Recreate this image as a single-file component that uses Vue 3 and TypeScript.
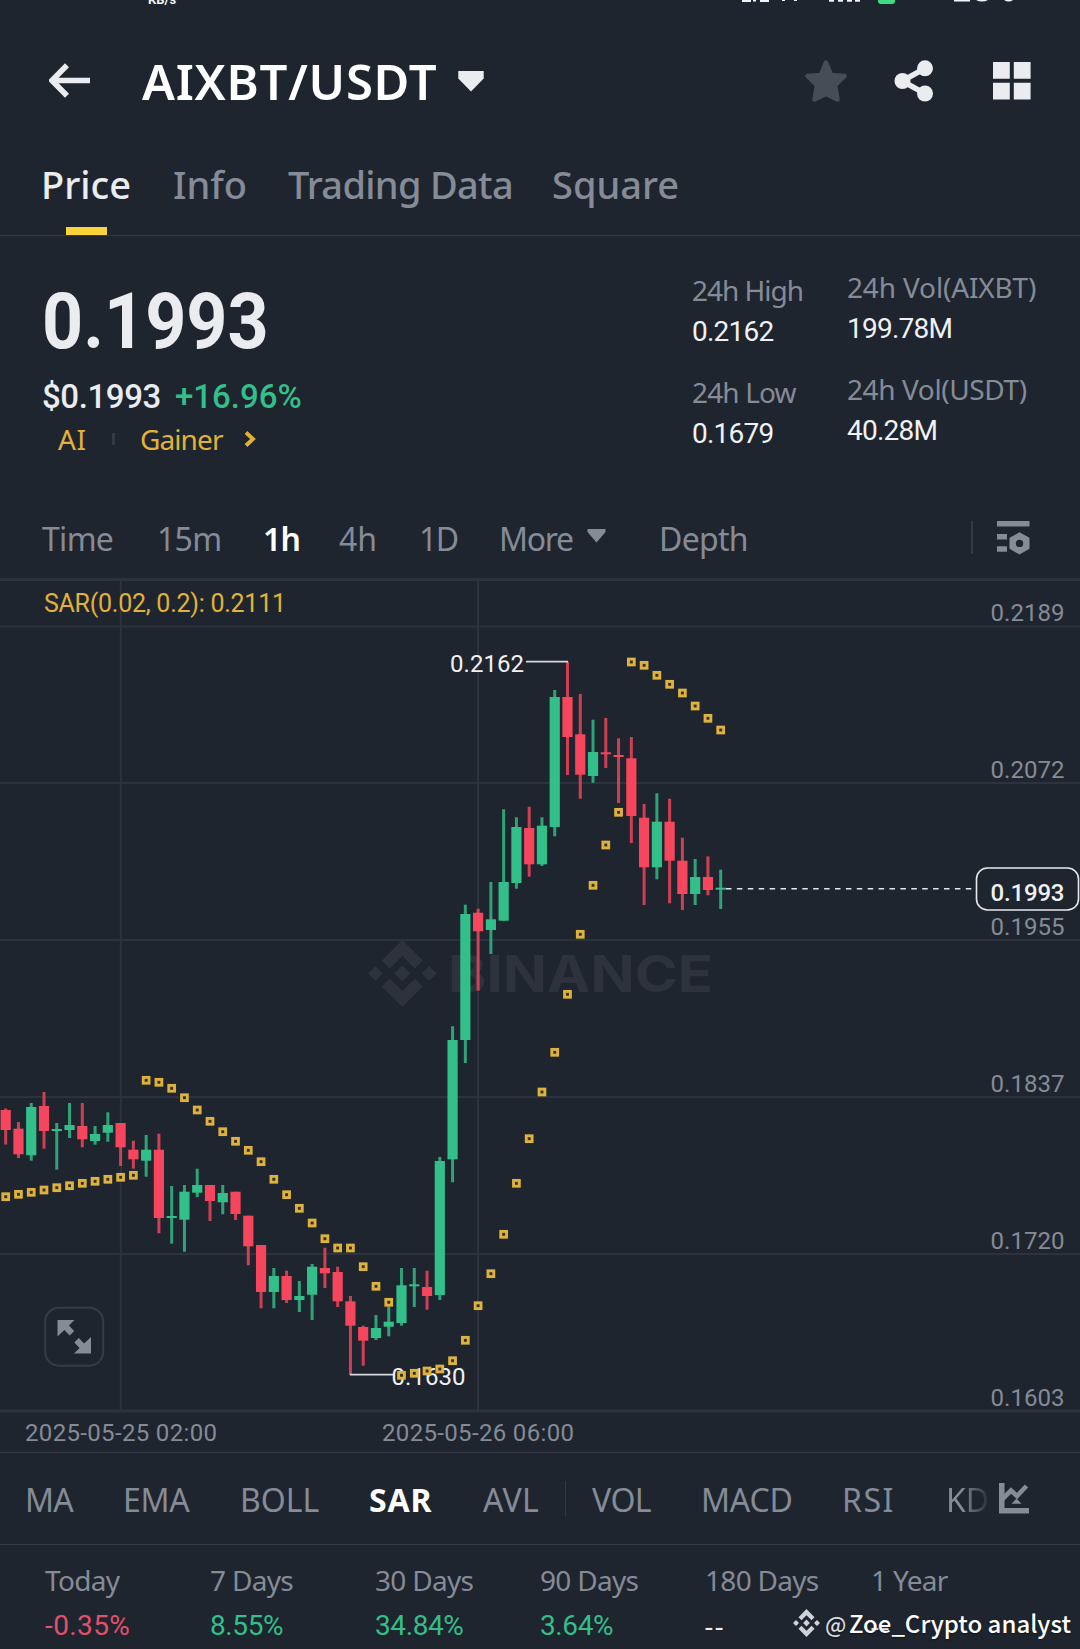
<script setup lang="ts">
type Candle = [high: number, top: number, bottom: number, low: number, up: 0 | 1]

const STEP = 12.768
const FIRST = 5.7
const cx = (i: number): number => FIRST + i * STEP

const candles: Candle[] = [
  [1108.5, 1110, 1130, 1144.5, 0], [1122, 1128.7, 1154.3, 1158, 0], [1103, 1107, 1155.3, 1160.7, 1],
  [1092, 1106, 1131, 1148.7, 0], [1123, 1129, 1131, 1169.7, 1], [1103, 1125, 1130, 1138, 1],
  [1103, 1126, 1139.3, 1147.3, 0], [1126, 1134, 1141, 1144.7, 1], [1112.3, 1125, 1132.7, 1141.7, 1],
  [1123, 1123, 1147.3, 1166, 0], [1140.7, 1149.7, 1159.3, 1168.7, 0], [1135, 1149.7, 1160.7, 1176.7, 1],
  [1133.7, 1149.7, 1218, 1233.3, 0], [1186, 1216, 1218, 1243.7, 1], [1185, 1191.7, 1219.7, 1251.7, 1],
  [1168.7, 1185, 1192.7, 1197, 1], [1185, 1185, 1201, 1221, 0], [1185, 1193, 1202.3, 1214.3, 1],
  [1191.7, 1191.7, 1214, 1220, 0], [1215.7, 1215.7, 1246.3, 1265.3, 0], [1245, 1245, 1292, 1308.3, 0],
  [1268, 1276, 1292, 1308.3, 1], [1270.7, 1276, 1300, 1303, 0], [1281, 1296, 1300, 1312, 1],
  [1264, 1266.7, 1294.7, 1320, 1], [1247.7, 1268, 1273.3, 1288, 0], [1266.7, 1272, 1301.3, 1307, 0],
  [1296, 1301.3, 1325.7, 1375, 0], [1325.7, 1327, 1340.7, 1365.7, 0], [1315, 1328, 1338, 1340, 1],
  [1306.7, 1321.7, 1326.7, 1336.3, 1], [1268, 1285.3, 1323, 1325.7, 1], [1268, 1284.3, 1286.3, 1307, 1],
  [1270.7, 1287, 1296, 1309.7, 0], [1157, 1161, 1295, 1300, 1], [1026.3, 1040, 1159.3, 1182.3, 1],
  [904.7, 914, 1040, 1063, 1], [908.7, 912.7, 931.3, 990.7, 0], [882, 919.3, 930, 954, 1],
  [809.3, 882, 920.7, 920.7, 1], [817.3, 827, 883, 888.7, 1], [806.7, 828, 864.3, 876.7, 0],
  [817.3, 825.7, 864.3, 866, 1], [690, 697, 827, 836.3, 1], [661.7, 697, 737, 775, 0],
  [694, 734.3, 774.7, 798.7, 0], [719.7, 752, 776, 782.7, 1], [718, 752.3, 754.3, 768, 0],
  [738.3, 755, 757, 803, 0], [737, 758.3, 816, 843, 0], [804, 817.7, 867.3, 905, 0],
  [793.3, 821.7, 867.3, 879.3, 1], [798.7, 821.7, 860.7, 903.3, 0], [837.7, 860.7, 894, 910, 0],
  [859, 877, 894, 905, 1], [856.3, 877, 890, 895.3, 0], [869.7, 887.7, 889.7, 909, 1],
]

const sar: number[] = [
  1196.7, 1194.3, 1192.3, 1190, 1187.7, 1185.7, 1183.3, 1181.3, 1179.3, 1177.3, 1175.3,
  1080.3, 1082.3, 1088.3, 1097.7, 1110, 1121.3, 1131.7, 1141.3, 1150.3, 1161.7,
  1179.3, 1194.7, 1208.3, 1223, 1238.7, 1248, 1248, 1266.7, 1286.3, 1302.3,
  1375.3, 1373.3, 1371, 1369, 1360.7, 1340.3, 1305.7, 1273.7, 1234.3, 1183.3,
  1138.7, 1092, 1052.3, 994.3, 934.3, 885.3, 845, 812.3,
  662, 665.3, 675.3, 684.3, 693, 706, 718.3, 730,
]

const axis = [
  { y: 626.5, label: '0.2189' },
  { y: 783, label: '0.2072' },
  { y: 940, label: '0.1955' },
  { y: 1097, label: '0.1837' },
  { y: 1254, label: '0.1720' },
  { y: 1411, label: '0.1603' },
]

const tabs = ['Price', 'Info', 'Trading Data', 'Square']
const frames = ['Time', '15m', '1h', '4h', '1D']
const overlays = ['MA', 'EMA', 'BOLL', 'SAR', 'AVL']
const oscillators = ['VOL', 'MACD', 'RSI', 'KD']
const stats = [
  [{ k: '24h High', v: '0.2162' }, { k: '24h Low', v: '0.1679' }],
  [{ k: '24h Vol(AIXBT)', v: '199.78M' }, { k: '24h Vol(USDT)', v: '40.28M' }],
]
const periods = [
  { k: 'Today', v: '-0.35%', c: 'down' },
  { k: '7 Days', v: '8.55%', c: 'up' },
  { k: '30 Days', v: '34.84%', c: 'up' },
  { k: '90 Days', v: '3.64%', c: 'up' },
  { k: '180 Days', v: '--', c: 'none' },
  { k: '1 Year', v: '--', c: 'none' },
]
</script>

<template>
  <div class="screen">
    <div class="status">
      <span class="speed">KB/s</span>
      <svg class="signals" width="290" height="6" viewBox="730 0 290 6">
        <g fill="#f4f5f7">
          <rect x="742" width="9" height="2" /><rect x="753" width="3" height="1.5" /><rect x="760" width="9" height="2" />
          <rect x="782" width="3" height="1" /><rect x="794" width="3" height="1" />
          <rect x="829" width="5" height="1.7" /><rect x="838" width="5" height="1.7" />
          <rect x="847" width="5" height="1.7" /><rect x="855" width="5" height="1.7" />
          <rect x="954" width="16" height="1.5" />
          <path d="M976 0h12q-6 3-12 0zM1004 0h9q-4 3-9 0z" />
        </g>
        <path d="M878 0h17v1q0 3-3 3h-11q-3 0-3-3z" fill="#3ddc84" />
      </svg>
    </div>

    <header class="header">
      <svg class="back" width="42" height="36" viewBox="0 0 42 36">
        <path d="M41 17.500H4M18 2.300L3 17.500l15 15.200" fill="none" stroke="#eaecef" stroke-width="5.600" />
      </svg>
      <h1>AIXBT/USDT</h1>
      <svg class="drop" width="26" height="21" viewBox="0 0 26 21">
        <path d="M.3 0h25.400v7.500L13 20.400.3 7.500z" fill="#eaecef" />
      </svg>
      <svg class="star" width="42" height="43" viewBox="0 0 42 43">
        <path d="M21 2.500l5.200 12.500L39.500 16l-9.500 9.500 2.500 14L21 34l-11.500 5.500L12 25.500 2.500 16l13.300-1z" fill="#474d57" stroke="#474d57" stroke-width="4.500" stroke-linejoin="round" />
      </svg>
      <svg class="share" width="40" height="42" viewBox="0 0 40 42">
        <path d="M31 8.300L8 21l23 12.700" fill="none" stroke="#eaecef" stroke-width="5.500" />
        <circle cx="31" cy="8.300" r="8" fill="#eaecef" /><circle cx="8.500" cy="21" r="8" fill="#eaecef" /><circle cx="31" cy="33.500" r="8" fill="#eaecef" />
      </svg>
      <svg class="apps" width="38" height="38" viewBox="0 0 38 38">
        <path d="M0 0h16.800v16.800H0zM20.800 0h16.800v16.800H20.800zM0 20.800h16.800v16.800H0zM20.800 20.800h16.800v16.800H20.800z" fill="#eaecef" />
      </svg>
    </header>

    <nav class="tabs">
      <span v-for="(t, i) in tabs" :key="t" :class="['tab', 't' + i, { on: i === 0 }]">{{ t }}</span>
    </nav>

    <section class="quote">
      <div class="left">
        <div class="last">0.1993</div>
        <div class="fiat"><span class="usd">$0.1993</span><span class="chg">+16.96%</span></div>
        <div class="tags">
          <span class="ai">AI</span><i /><span class="gainer">Gainer</span>
          <svg width="12" height="16" viewBox="0 0 12 16"><path d="M2 1.500L9 8l-7 6.500" fill="none" stroke="#e2b238" stroke-width="3.800" /></svg>
        </div>
      </div>
      <div v-for="(col, c) in stats" :key="c" :class="['stats', 's' + c]">
        <div v-for="(s, r) in col" :key="s.k" class="stat">
          <div :class="['k', 'r' + r]">{{ s.k }}</div>
          <div class="v">{{ s.v }}</div>
        </div>
      </div>
    </section>

    <nav class="frames">
      <span v-for="(f, i) in frames" :key="f" :class="['f' + i, { on: f === '1h' }]">{{ f }}</span>
      <span class="more">More</span>
      <svg class="caret" width="19" height="14" viewBox="0 0 19 14"><path d="M.5 0h18v3L9.500 13.500.5 3z" fill="#858b97" /></svg>
      <span class="depth">Depth</span>
      <i class="bar" />
      <svg class="prefs" width="33" height="34" viewBox="0 0 33 34">
        <g fill="#858b97">
          <path d="M0 0h32.500v5.500H0zM0 13h10v5.500H0zM0 25.300h10v5.500H0z" />
          <path fill-rule="evenodd" d="M22.500 11.300l10 5.500v11l-10 5.700-10-5.700v-11zM22.500 18.700a3.700 3.700 0 1 0 0 7.400a3.700 3.700 0 1 0 0-7.400z" />
        </g>
      </svg>
    </nav>

    <svg class="chart" width="1080" height="874" viewBox="0 578 1080 874">
      <g stroke="#2d333e">
        <line x1="0" x2="1080" y1="579.500" y2="579.500" stroke-width="3" />
        <line v-for="a in axis" :key="a.y" x1="0" x2="1080" :y1="a.y" :y2="a.y" :stroke-width="a.y > 1400 ? 3 : 2" />
        <line x1="120.800" x2="120.800" y1="580" y2="1411" stroke-width="2" />
        <line x1="478" x2="478" y1="580" y2="1411" stroke-width="2" />
      </g>
      <g fill="#2d323d">
        <path d="M402.300 940l20.500 20.500-8 8-12.500-12.500-12.500 12.500-8-8zM402.300 1007l20.500-20.500-8-8-12.500 12.500-12.500-12.500-8 8zM375.500 966l7.500 7.500-7.500 7.500-7.500-7.500zM429.200 966l7.500 7.500-7.500 7.500-7.500-7.500zM402.300 965.500l8 8-8 8-8-8z" />
        <text class="mark" x="448" y="992" textLength="265" lengthAdjust="spacingAndGlyphs">BINANCE</text>
      </g>

      <text v-for="a in axis" :key="a.label" class="num" x="990.500" :y="a.y - 5.400" textLength="74">{{ a.label }}</text>
      <text class="num sar" x="44" y="611.500" textLength="242">SAR(0.02, 0.2): 0.2111</text>
      <text class="num" x="25" y="1441" textLength="192">2025-05-25 02:00</text>
      <text class="num" x="382" y="1441" textLength="192">2025-05-26 06:00</text>

      <g v-for="(c, i) in candles" :key="i" :fill="c[4] ? '#33bf89' : '#f6465d'">
        <rect :x="cx(i) - 1.500" :y="c[0]" width="3" :height="c[3] - c[0]" opacity=".82" />
        <rect :x="cx(i) - 5.100" :y="c[1]" width="10.200" :height="c[2] - c[1]" />
      </g>

      <path d="M526 661.700H568M350 1374.700H393" stroke="#d5d8de" stroke-width="1.800" />
      <text class="num bright" x="450" y="672" textLength="74">0.2162</text>
      <text class="num bright" x="391.500" y="1385" textLength="74">0.1630</text>

      <rect v-for="(y, i) in sar" :key="'s' + i" :x="cx(i) - 2.900" :y="y - 2.900" width="5.800" height="5.800" fill="#3a2e12" stroke="#ddb23e" stroke-width="2.900" />

      <line x1="726" x2="975" y1="888.700" y2="888.700" stroke="#e6e8ec" stroke-width="1.500" stroke-dasharray="5.500 5.400" />
      <rect x="976.500" y="868" width="102" height="42" rx="11" fill="#1f252e" stroke="#e6e8ec" stroke-width="1.600" />
      <text class="num bright tag" x="990.500" y="901" textLength="74">0.1993</text>

      <rect x="45.200" y="1307.700" width="58" height="58" rx="14" fill="#1f252e" stroke="#363c47" stroke-width="2" />
      <path d="M57.500 1320h17l-5.600 5.600 5.300 5.300-4.500 4.500-5.300-5.300-6.900 6.400zM91 1353.500h-17l5.600-5.600-5.300-5.300 4.500-4.500 5.300 5.300 6.900-6.400z" fill="#858b97" />
    </svg>

    <nav class="indicators">
      <span v-for="(n, i) in overlays" :key="n" :class="['o' + i, { on: n === 'SAR' }]">{{ n }}</span>
      <i />
      <span v-for="(n, i) in oscillators" :key="n" :class="'q' + i">{{ n }}</span>
      <svg width="31" height="31" viewBox="0 0 31 31">
        <g fill="#858b97">
          <path d="M0 0h5.500v25H30v5.600H0z" />
          <path d="M17.500 15.500l5 5.300h-10z" />
        </g>
        <path d="M3 16.500l9-9 6 5.500L27.500 3" fill="none" stroke="#858b97" stroke-width="4.600" />
      </svg>
    </nav>

    <section class="periods">
      <div v-for="(p, i) in periods" :key="p.k" :class="'p' + i">
        <div class="k">{{ p.k }}</div>
        <div :class="['v', p.c]">{{ p.v }}</div>
      </div>
      <div class="credit">
        <svg width="27" height="28" viewBox="0 0 27 28">
          <path d="M13.500 0l8 8.200-3 3-5-5-5 5-3-3zM13.500 28l8-8.200-3-3-5 5-5-5-3 3zM3 11l3 3-3 3-3-3zM24 11l3 3-3 3-3-3zM13.500 10.500l3.400 3.500-3.400 3.500-3.400-3.500z" fill="#cfd2d6" />
        </svg>
        <span class="at">@</span><span class="name">Zoe_Crypto analyst</span>
      </div>
    </section>
  </div>
</template>

<style>
body { margin: 0; background: #1f252e; }
</style>

<style scoped>
.screen { position: relative; width: 1080px; height: 1649px; overflow: hidden; background: #1f252e; color: #858b97; font-family: "Noto Sans", "Open Sans", sans-serif; white-space: nowrap; }
.screen svg { display: block; flex: none; }
i { display: block; flex: none; background: #333a45; }
span { flex: none; }

.status { display: flex; height: 24px; align-items: flex-start; padding-left: 148px; }
.speed { width: 582px; height: 6px; display: flex; align-items: flex-end; overflow: hidden; font: 700 13px/13px Roboto, sans-serif; color: #f4f5f7; }

.header { display: flex; align-items: center; height: 114px; padding-left: 49px; }
.header h1 { margin: 0 0 0 51px; width: 316px; font-size: 49px; font-weight: 600; line-height: 114px; letter-spacing: .75px; color: #fff; }
.drop { margin-right: 321px; }
.star { margin-right: 47px; }
.share { margin-right: 59px; }

.tabs { display: flex; height: 97px; padding-left: 41px; border-bottom: 1px solid #333a45; font-size: 38px; font-weight: 500; line-height: 92px; }
.tab { position: relative; }
.tab.on { color: #eaecef; }
.tab.on::after { content: ""; position: absolute; left: 25px; bottom: 0; width: 41px; height: 8px; background: #f8d33a; }
.t0 { width: 132px; }
.t1 { width: 115px; }
.t2 { width: 264px; letter-spacing: -.7px; }

.quote { display: flex; height: 261px; }
.left { width: 650px; padding: 41px 0 0 42px; }
.last { font: 700 78px/90px Roboto, sans-serif; color: #eaecef; transform: scaleX(.92); transform-origin: 0 0; }
.fiat { display: flex; margin-top: 8px; font: 500 33px/44px Roboto, sans-serif; }
.usd { width: 133px; letter-spacing: -.4px; color: #eaecef; }
.chg { color: #33bf89; }
.tags { display: flex; align-items: center; height: 40px; padding-left: 16px; font-size: 28px; color: #e2b238; }
.ai { width: 54px; letter-spacing: .5px; }
.tags i { width: 3px; height: 12px; margin-right: 25px; }
.gainer { width: 104px; letter-spacing: -.9px; }
.stats { display: flex; flex-direction: column; gap: 20px; width: 155px; padding-top: 34px; letter-spacing: -1px; }
.s1 { padding-top: 31px; letter-spacing: -.15px; }
.s0 .r1 { letter-spacing: -.85px; }
.s1 .r1 { letter-spacing: -.4px; }
.stat { font-size: 28px; line-height: 41px; }
.stat .v { font-family: Roboto, sans-serif; letter-spacing: -.75px; color: #f0f1f4; }

.frames { display: flex; align-items: center; height: 81px; padding-left: 42px; font-size: 32px; letter-spacing: -.7px; }
.frames span { padding-top: 2px; }
.frames .on { color: #fff; font-weight: 600; }
.f0 { width: 115px; }
.f1 { width: 106px; }
.f2 { width: 76px; }
.f3 { width: 80px; letter-spacing: 0; }
.f4 { width: 80px; letter-spacing: -1.500px; }
.more { width: 88px; letter-spacing: -1.300px; }
.caret { margin: -4px 53px 0 0; }
.depth { width: 312px; }
.frames .bar { width: 2px; height: 33px; margin-right: 24px; }

.mark { font: 700 51px Inter, sans-serif; }
.num { font: 400 24px Roboto, sans-serif; fill: #858b97; }
.num.sar { fill: #e0b23b; font-size: 25px; }
.num.bright { fill: #f0f1f4; }
.num.tag { font-weight: 500; }

.indicators { display: flex; align-items: center; height: 91px; padding-left: 25px; border-top: 1px solid #333a45; border-bottom: 1px solid #333a45; font-size: 32px; }
.indicators span { padding-top: 2px; }
.indicators .on { color: #fff; font-weight: 700; }
.indicators i { width: 1px; height: 35px; margin-right: 26px; }
.o0 { width: 98px; letter-spacing: -.8px; }
.o1 { width: 117px; letter-spacing: -.3px; }
.o2 { width: 129px; }
.o3 { width: 114px; letter-spacing: .9px; }
.o4 { width: 82px; letter-spacing: .3px; }
.q0 { width: 109px; letter-spacing: -.5px; }
.q1 { width: 141px; letter-spacing: -.2px; }
.q2 { width: 104px; letter-spacing: 1.500px; }
.q3 { width: 53px; background: linear-gradient(90deg, #858b97 30%, #1f252e 85%); background-clip: text; color: transparent; }

.periods { position: relative; display: flex; height: 104px; padding-left: 45px; font-size: 28px; letter-spacing: -.7px; }
.periods .k { padding-top: 12px; line-height: 46px; }
.periods .v { padding-top: 1px; font-family: Roboto, sans-serif; line-height: 44px; letter-spacing: -.4px; }
.periods .up { color: #33bf89; }
.periods .down { letter-spacing: .4px; color: #e0506a; }
.periods .none { padding-top: 3px; letter-spacing: 2.500px; color: #eaecef; }
.p0, .p1, .p2, .p3 { width: 165px; }
.p4 { width: 166px; }
.credit { position: absolute; left: 793px; top: 58px; display: flex; align-items: center; height: 40px; color: #fff; font: 500 24px/40px "Noto Sans CJK SC", sans-serif; letter-spacing: 0; text-shadow: 0 1px 2px rgba(0, 0, 0, .5); }
.at { width: 24px; margin-left: 5px; font-size: 22px; color: #d8dadd; }
</style>
